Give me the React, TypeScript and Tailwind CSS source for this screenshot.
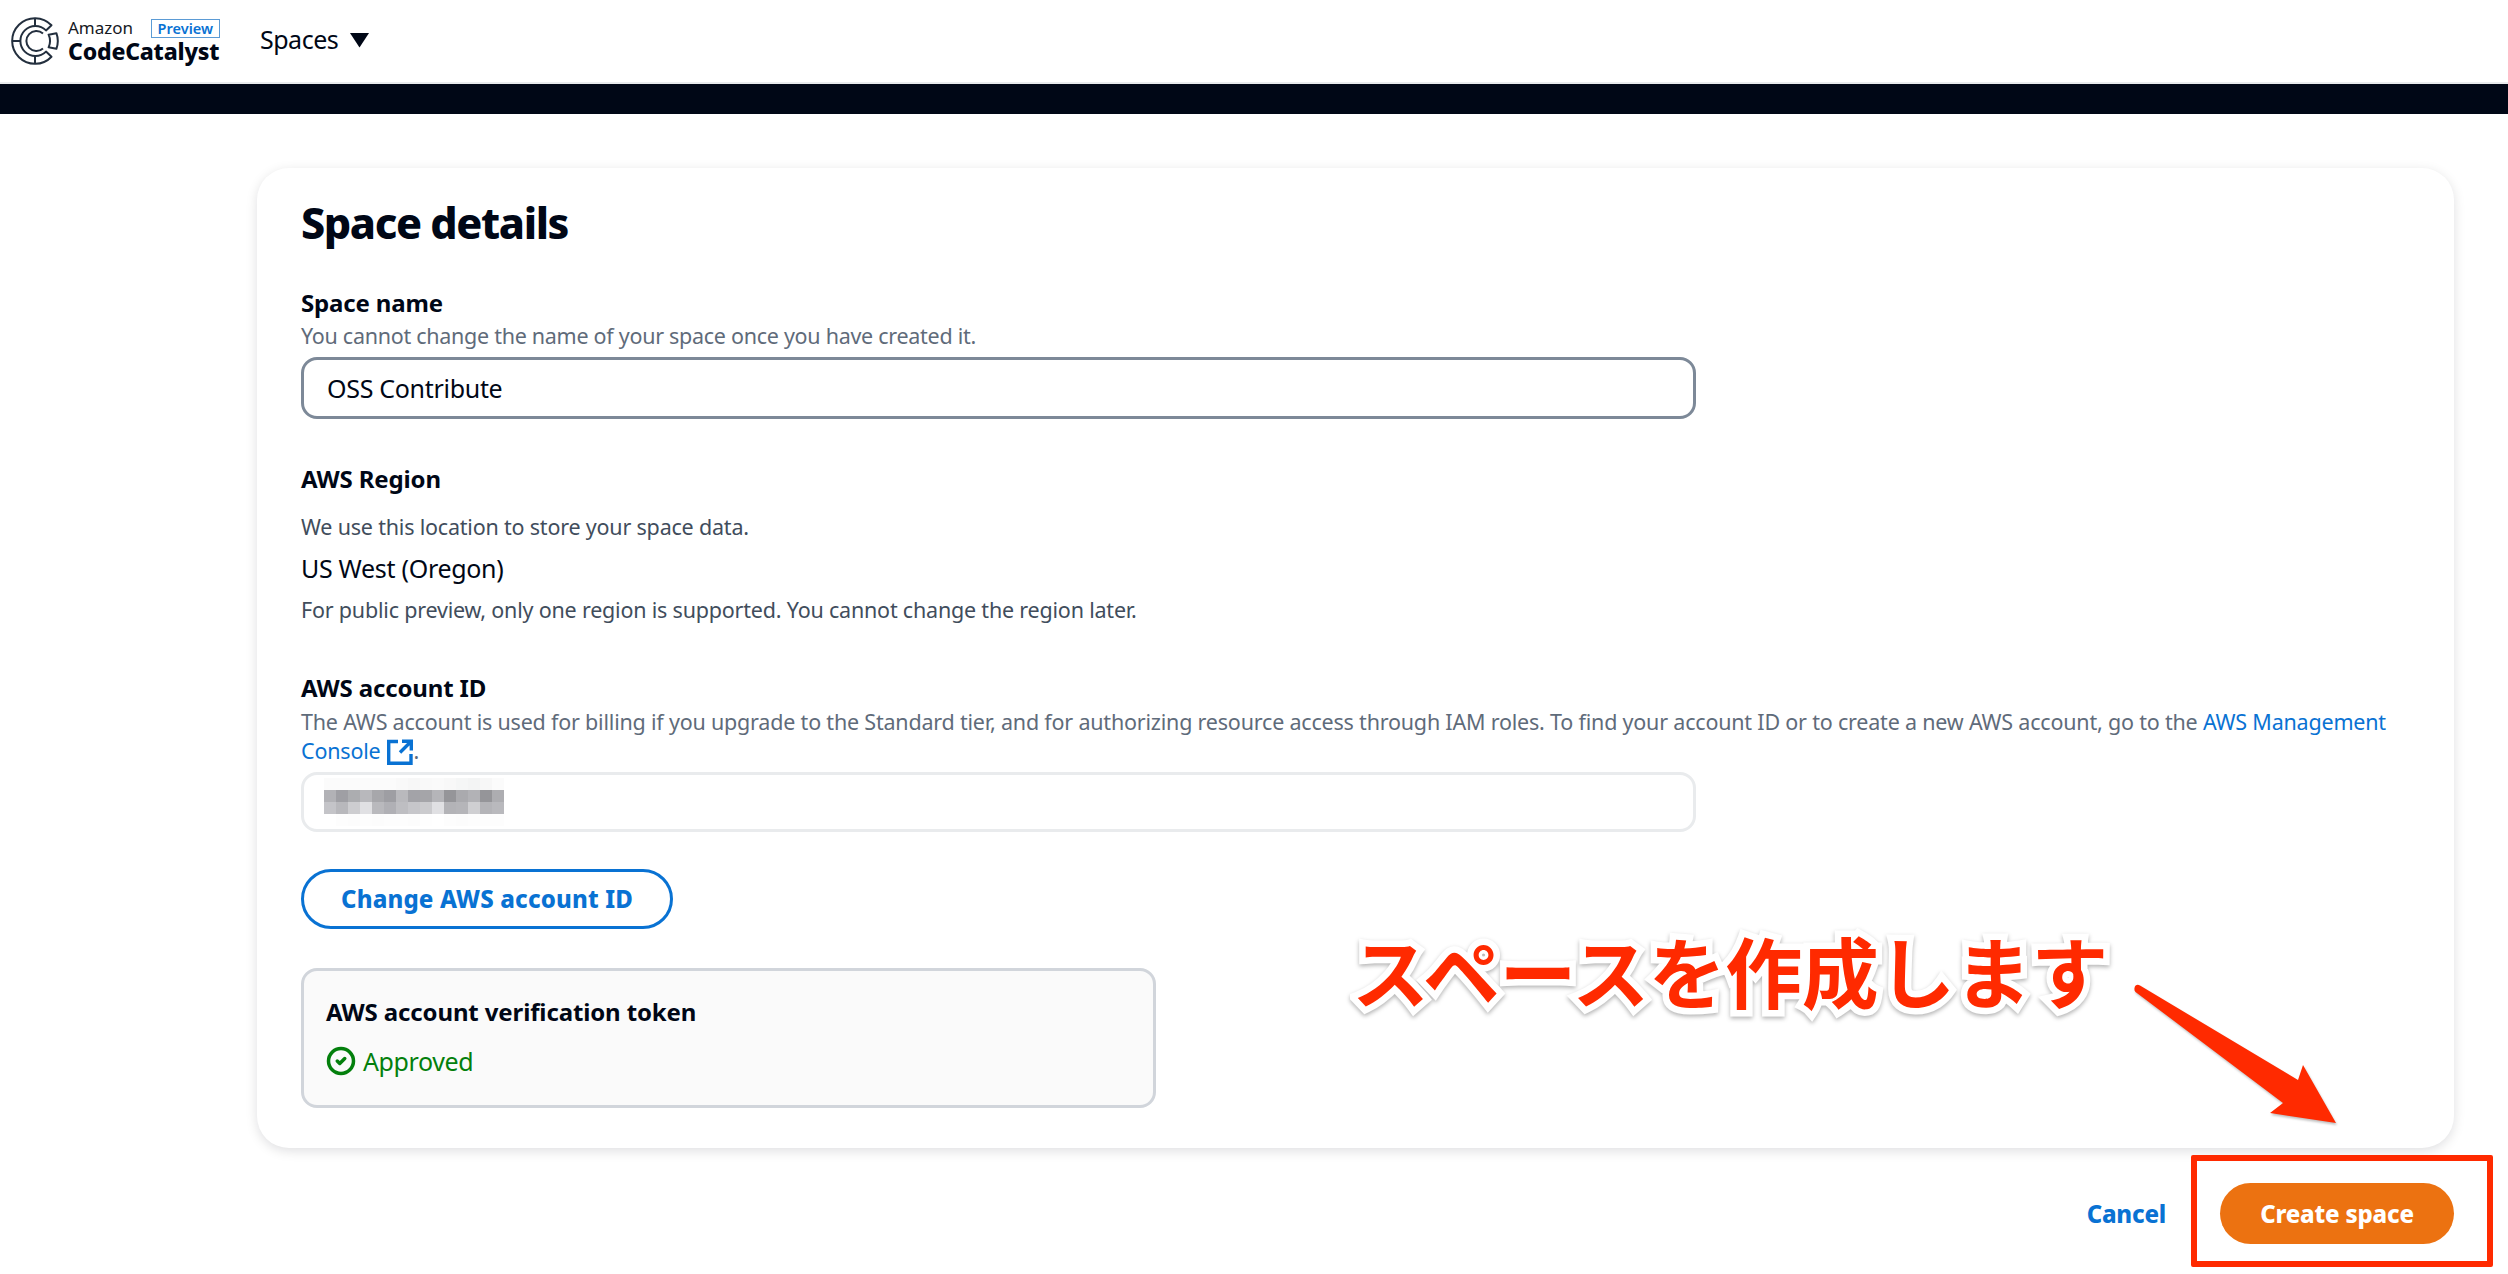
import { CircleCheck } from "lucide-react";

const ember = "font-['Noto_Sans','Liberation_Sans',sans-serif]";

// mosaic over the blurred account number, 12px cells
const mosaic = [
  ["#fbfbfb", "#fbfbfb", "#fbfbfb", "#fbfbfb", "#fbfbfb", "#fbfbfb", "#f9f9f9", "#f7f7f7", "#f9f9f9", "#fafafa", "#f8f8f8", "#f5f6f6", "#f3f4f4", "#f7f7f7", "#fbfbfb"],
  ["#b2b2b6", "#9f9fa4", "#acadb0", "#b8b8bc", "#a7a7ab", "#9e9ea3", "#b9b9bd", "#a3a3a8", "#a5a5a9", "#b5b5b9", "#959599", "#aaaaae", "#b2b2b6", "#959599", "#adadb1"],
  ["#c4c4c8", "#b8b8bc", "#cdcdd0", "#e0e0e3", "#b9b9bd", "#b0b0b5", "#bebec2", "#c6c6ca", "#cbcbce", "#e0e0e3", "#b3b3b7", "#b5b5b9", "#cfcfd2", "#b4b4b8", "#b9b9bd"],
  ["#ffffff", "#fdfdfd", "#fcfcfc", "#fdfdfd", "#fcfcfc", "#fdfdfd", "#fdfdfd", "#fcfcfc", "#fefefe", "#ffffff", "#fdfdfd", "#fcfcfc", "#fdfdfd", "#fdfdfd", "#fdfdfd"],
];

function Logo() {
  return (
    <svg width="50" height="50" viewBox="0 0 50 50" fill="none" stroke="#232f3e" strokeWidth="2" strokeLinejoin="round" className="shrink-0">
      <path d="M41.5 9.3A22.8 22.8 0 1 0 41.5 40.7L36 35.6A15 15 0 1 1 36 14.4Z" />
      <path d="M46.4 17.2A22.8 22.8 0 0 1 46.4 32.8L38.6 31.3A15 15 0 0 0 38.6 18.7Z" />
      <path d="M33 17.5A10 10 0 1 0 33 32.5" />
      <path d="M25 2.2V10M25 40V47.8M2.2 25H10" />
    </svg>
  );
}

function ExternalIcon() {
  return (
    <svg width="26" height="26" viewBox="0 0 26 26" fill="none" stroke="#0972d3" strokeWidth="3.4" className="ml-[7px] inline-block align-[-6px]">
      <path d="M11 2.5H1.7V24.3H24V15" />
      <path d="M15 2.2H24.3V11.5M24 2.5L13 13.5" />
    </svg>
  );
}

function Label({ children }: { children: React.ReactNode }) {
  return <div className="text-[24px] leading-[32px] font-bold text-[#000716] tracking-[-0.15px]">{children}</div>;
}

function Help({ children, className }: { children: React.ReactNode; className: string }) {
  return <div className={`text-[21.5px] ${className}`}>{children}</div>;
}

export default function App() {
  return (
    <div className={`${ember} relative h-[1274px] w-[2508px] overflow-hidden bg-white`}>
      <header className="flex h-[84px] items-center border-b-2 border-[#e9ebed] pl-[10px]">
        <Logo />
        <div className="ml-[8px] w-[152px]">
          <div className="flex items-center justify-between">
            <span className="text-[17px] leading-[20px] text-[#16191f] tracking-[0px]">Amazon</span>
            <span className="border border-[#5b9bd5] px-[6px] text-[14.5px] leading-[17px] font-semibold text-[#0972d3]">Preview</span>
          </div>
          <div className="text-[23px] leading-[26px] font-extrabold text-[#000716] tracking-[-0.2px] whitespace-nowrap">CodeCatalyst</div>
        </div>
        <div className="ml-[40px] -mt-[2px] flex items-center gap-[12px] text-[25px] text-[#000716] tracking-[-0.5px]">
          Spaces
          <svg width="20" height="16" viewBox="0 0 20 16" fill="#000716"><path d="M0 1H19L9.5 15.5Z" /></svg>
        </div>
      </header>
      <div className="h-[30px] bg-[#000716]" />

      <main className="pl-[257px] pr-[54px] pt-[54px]">
        <section className="h-[980px] rounded-[32px] bg-white pl-[44px] pr-[60px] pt-[27px] shadow-[0_3px_12px_rgba(0,7,22,0.13)]">
          <h1 className="text-[43px] leading-[56px] font-extrabold text-[#000716] tracking-[-1.4px]">Space details</h1>

          <div className="mt-[36px]"><Label>Space name</Label></div>
          <div className="mt-[3px]">
            <Help className="leading-[28px] tracking-[-0.28px] text-[#5f6b7a]">You cannot change the name of your space once you have created it.</Help>
          </div>
          <div className="mt-[7px] flex h-[62px] w-[1395px] items-center rounded-[16px] border-[3px] border-[#7d8998] pl-[23px] pt-[1px] text-[25px] text-[#000716] tracking-[-0.3px]">
            OSS Contribute
          </div>

          <div className="mt-[44px]"><Label>AWS Region</Label></div>
          <div className="mt-[18px]">
            <Help className="leading-[28px] tracking-[-0.2px] text-[#414d5c]">We use this location to store your space data.</Help>
          </div>
          <div className="mt-[11px] text-[25px] leading-[32px] text-[#000716] tracking-[-0.3px]">US West (Oregon)</div>
          <div className="mt-[12px]">
            <Help className="leading-[28px] tracking-[-0.2px] text-[#414d5c]">For public preview, only one region is supported. You cannot change the region later.</Help>
          </div>

          <div className="mt-[48px]"><Label>AWS account ID</Label></div>
          <div className="mt-[3px]">
            <Help className="leading-[29px] tracking-[-0.2px] text-[#5f6b7a]">
              The AWS account is used for billing if you upgrade to the Standard tier, and for authorizing resource access through IAM roles. To find your account ID or to create a new AWS account, go to the{" "}
              <span className="text-[#0972d3]">AWS Management Console</span>
              <ExternalIcon />.
            </Help>
          </div>
          <div className="mt-[7px] flex h-[60px] w-[1395px] items-center rounded-[16px] border-[3px] border-[#e9ebed] pl-[20px]">
            <div className="grid grid-cols-[repeat(15,12px)] grid-rows-[repeat(4,12px)]">
              {mosaic.flat().map((c, i) => (
                <div key={i} style={{ backgroundColor: c }} />
              ))}
            </div>
          </div>

          <button className="mt-[37px] block h-[60px] w-[372px] rounded-full border-[3px] border-[#0972d3] text-[24px] font-extrabold text-[#0972d3] tracking-[0.15px]">
            Change AWS account ID
          </button>

          <div className="mt-[39px] h-[140px] w-[855px] rounded-[16px] border-[3px] border-[#d1d5db] bg-[#fafafa] pl-[22px] pt-[25px]">
            <div className="text-[24px] leading-[32px] font-bold text-[#000716] tracking-[-0.13px]">AWS account verification token</div>
            <div className="mt-[17px] flex items-center gap-[7px] text-[25px] leading-[32px] text-[#037f0c] tracking-[-0.4px]">
              <CircleCheck size={30} strokeWidth={2.8} />
              Approved
            </div>
          </div>
        </section>

        <div className="mt-[35px] flex items-center justify-end">
          <span className="text-[24px] font-extrabold text-[#0972d3] tracking-[-0.2px]">Cancel</span>
          <button className="ml-[54px] h-[61px] w-[234px] rounded-full bg-[#ec7211] text-[24px] font-extrabold text-white tracking-[-0.2px]">
            Create space
          </button>
        </div>
      </main>

      {/* annotation layer */}
      <div className="absolute left-[1352px] top-[922px] font-['Noto_Sans_CJK_JP',sans-serif] text-[77px] leading-[96px] font-bold whitespace-nowrap text-[#ff2a00] tracking-[-0.5px] [-webkit-text-stroke:13px_white] [paint-order:stroke_fill] drop-shadow-[0_2px_2px_rgba(0,0,0,0.3)]">
        スペースを作成します
      </div>
      <svg className="absolute left-[2125px] top-[975px] drop-shadow-[1px_2px_1px_rgba(0,0,0,0.25)]" width="225" height="160" viewBox="0 0 225 160" fill="#ff2a00">
        <path d="M9.5 13C10 9.5 13 9 15 10.5L173 105L178 90L211 148L145 138L158 128L10.5 17C9.5 16 9.3 14.5 9.5 13Z" />
      </svg>
      <div className="absolute left-[2191px] top-[1155px] h-[112px] w-[302px] rounded-[2px] border-[6px] border-[#ff2a00]" />
    </div>
  );
}
